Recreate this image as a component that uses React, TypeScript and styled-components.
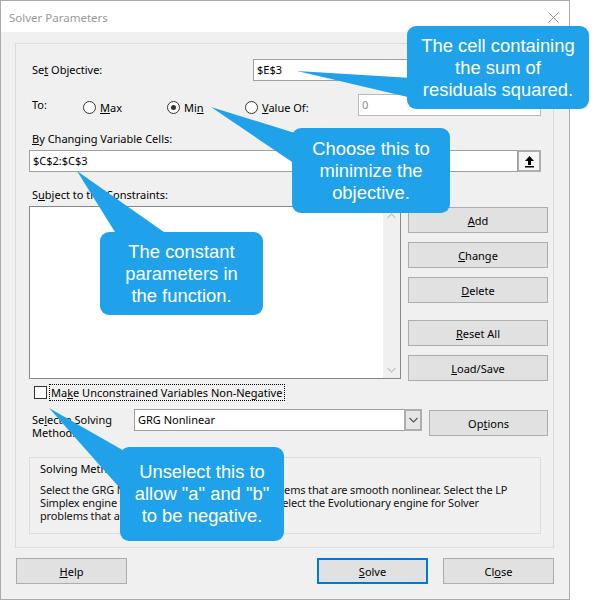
import React from "react";
import styled, { createGlobalStyle } from "styled-components";

const GlobalStyle = createGlobalStyle`
  html, body { margin: 0; padding: 0; background: #ffffff; }
  body { font-family: "Noto Sans", "Open Sans", sans-serif; }
  * { box-sizing: border-box; }
`;

const Page = styled.div`
  position: relative;
  width: 594px;
  height: 600px;
  overflow: hidden;
  background: #ffffff;
`;

const Window = styled.div`
  width: 570px;
  height: 600px;
  border: 1px solid #aaaaaa;
  display: flex;
  flex-direction: column;
  background: #f0f0f0;
  font-size: 11px;
  line-height: 15px;
  color: #000;
`;

const TitleBar = styled.div`
  height: 31px;
  flex-shrink: 0;
  background: #ffffff;
  display: flex;
  align-items: center;
  justify-content: space-between;
  padding: 1px 10px 0 8px;
`;

const Title = styled.span`
  font-size: 11.5px;
  color: #999999;
`;

const Body = styled.div`
  flex: 1;
  padding: 11px 15px 0 14px;
`;

const Panel = styled.div`
  height: 505px;
  border: 1px solid #dadada;
  padding: 15px 5px 0 13px;
  display: flex;
  flex-direction: column;
`;

const Row = styled.div<{ $mt?: number; $h?: number }>`
  display: flex;
  align-items: center;
  margin-top: ${(p) => p.$mt ?? 0}px;
  height: ${(p) => (p.$h ? `${p.$h}px` : "auto")};
`;

const Label = styled.div<{ $w?: number }>`
  width: ${(p) => (p.$w ? `${p.$w}px` : "auto")};
  padding-left: 3px;
  line-height: 16px;
  flex-shrink: 0;
`;

const TextField = styled.div<{ $w: number }>`
  width: ${(p) => p.$w}px;
  height: 22px;
  display: flex;
  flex-shrink: 0;
`;

const Field = styled.div<{ $disabled?: boolean }>`
  flex: 1;
  border: 1px solid ${(p) => (p.$disabled ? "#b9b9b9" : "#a0a0a0")};
  background: #ffffff;
  color: ${(p) => (p.$disabled ? "#8a8a8a" : "#000")};
  padding: 2px 0 0 3px;
  white-space: nowrap;
  overflow: hidden;
`;

const RefButton = styled.div`
  width: 23px;
  border: 2px solid #adadad;
  border-left-width: 1px;
  background: #f6f6f6;
  display: flex;
  align-items: center;
  justify-content: center;
`;

const RadioItem = styled.label<{ $w: number }>`
  width: ${(p) => p.$w}px;
  display: flex;
  align-items: center;
  gap: 4px;
  margin-top: 4px;
  flex-shrink: 0;
`;

const RadioCircle = styled.span<{ $checked?: boolean }>`
  width: 13px;
  height: 13px;
  border: 1px solid #333333;
  border-radius: 50%;
  background: #ffffff;
  display: flex;
  align-items: center;
  justify-content: center;
  &::after {
    content: "";
    width: 5px;
    height: 5px;
    border-radius: 50%;
    background: ${(p) => (p.$checked ? "#333333" : "transparent")};
  }
`;

const ListRow = styled.div`
  display: flex;
  gap: 7px;
  margin-top: 3px;
  height: 175px;
`;

const ListBox = styled.div`
  width: 372px;
  height: 173px;
  border: 1px solid #828790;
  background: #ffffff;
  display: flex;
  justify-content: flex-end;
`;

const ScrollBar = styled.div`
  width: 17px;
  background: #f0f0f0;
  display: flex;
  flex-direction: column;
  justify-content: space-between;
`;

const ScrollArrow = styled.div`
  height: 17px;
  display: flex;
  align-items: center;
  justify-content: center;
`;

const ButtonColumn = styled.div`
  width: 140px;
  padding-top: 1px;
  display: flex;
  flex-direction: column;
`;

const Button = styled.div<{ $w?: number; $mt?: number; $ml?: number; $primary?: boolean }>`
  width: ${(p) => (p.$w ? `${p.$w}px` : "100%")};
  height: 26px;
  margin-top: ${(p) => p.$mt ?? 0}px;
  margin-left: ${(p) => p.$ml ?? 0}px;
  flex-shrink: 0;
  background: #e1e1e1;
  border: ${(p) => (p.$primary ? "2px solid #0078d7" : "1px solid #adadad")};
  display: flex;
  align-items: center;
  justify-content: center;
`;

const CheckRow = styled.div`
  display: flex;
  align-items: center;
  margin-top: 3px;
  height: 17px;
  padding-left: 5px;
`;

const CheckBox = styled.span`
  width: 13px;
  height: 13px;
  border: 1px solid #333333;
  background: #ffffff;
  margin-right: 2px;
`;

const FocusLabel = styled.span`
  height: 17px;
  border: 1px dotted #000000;
  padding: 0 2px 0 1px;
  line-height: 15px;
`;

const MethodRow = styled.div`
  display: flex;
  align-items: flex-start;
  margin-top: 8px;
  height: 30px;
`;

const MethodLabel = styled.div`
  width: 105px;
  padding: 4px 0 0 3px;
  line-height: 13px;
  flex-shrink: 0;
`;

const Combo = styled.div`
  width: 288px;
  height: 22px;
  border: 1px solid #a0a0a0;
  background: #ffffff;
  display: flex;
  flex-shrink: 0;
`;

const ComboText = styled.div`
  flex: 1;
  padding: 2px 0 0 3px;
`;

const ComboArrow = styled.div`
  width: 18px;
  margin: -1px -1px -1px 0;
  border: 2px solid #adadad;
  background: #e6e6e6;
  display: flex;
  align-items: center;
  justify-content: center;
`;

const GroupBox = styled.div`
  width: 512px;
  height: 77px;
  margin-top: 18px;
  border: 1px solid #dcdcdc;
  padding: 4px 10px 0 10px;
  line-height: 13px;
`;

const GroupText = styled.div`
  margin-top: 8px;
  color: #111111;
  letter-spacing: -0.15px;
  white-space: nowrap;
`;

const Footer = styled.div`
  margin-top: 10px;
  padding-left: 1px;
  display: flex;
  justify-content: space-between;
`;

const FooterRight = styled.div`
  display: flex;
  gap: 15px;
`;

const TailLayer = styled.svg`
  position: absolute;
  left: 0;
  top: 0;
  pointer-events: none;
`;

const Bubble = styled.div<{ $x: number; $y: number; $w: number; $h: number }>`
  position: absolute;
  left: ${(p) => p.$x}px;
  top: ${(p) => p.$y}px;
  width: ${(p) => p.$w}px;
  height: ${(p) => p.$h}px;
  background: #1fa2ea;
  border-radius: 9px;
  color: #ffffff;
  font-family: "Liberation Sans", Arial, sans-serif;
  font-size: 18.4px;
  line-height: 22px;
  display: flex;
  align-items: center;
  justify-content: center;
  text-align: center;
`;

const BLUE = "#1fa2ea";

const callouts = [
  {
    x: 407, y: 26, w: 182, h: 83,
    tail: "297,71 412,78 412,98",
    lines: ["The cell containing", "the sum of", "residuals squared."],
  },
  {
    x: 292, y: 128, w: 158, h: 85,
    tail: "211,107 298,134 298,166",
    lines: ["Choose this to", "minimize the", "objective."],
  },
  {
    x: 100, y: 232, w: 163, h: 83,
    tail: "77,171 118,237 171,237",
    lines: ["The constant", "parameters in", "the function."],
  },
  {
    x: 120, y: 447, w: 164, h: 94,
    tail: "49,408 126,452 126,495",
    lines: ["Unselect this to", 'allow "a" and "b"', "to be negative."],
  },
];

const CloseIcon = () => (
  <svg width="11" height="11" viewBox="0 0 11 11">
    <path d="M0.5 0.5 L10.5 10.5 M10.5 0.5 L0.5 10.5" stroke="#8f8f8f" strokeWidth="1" />
  </svg>
);

const RefArrow = () => (
  <svg width="11" height="13" viewBox="0 0 11 13">
    <path d="M5.5 1 L10 6 L7 6 L7 10 L4 10 L4 6 L1 6 Z" fill="#000" />
    <rect x="1" y="11" width="9" height="1.5" fill="#000" />
  </svg>
);

const Chevron = ({ up, color }: { up?: boolean; color: string }) => (
  <svg width="9" height="6" viewBox="0 0 9 6">
    <path
      d={up ? "M0.5 5 L4.5 1 L8.5 5" : "M0.5 1 L4.5 5 L8.5 1"}
      stroke={color}
      strokeWidth="1.2"
      fill="none"
    />
  </svg>
);

export default function App() {
  return (
    <Page>
      <GlobalStyle />
      <Window>
        <TitleBar>
          <Title>Solver Parameters</Title>
          <CloseIcon />
        </TitleBar>
        <Body>
          <Panel>
            <Row $h={22}>
              <Label $w={224}>
                Se<u>t</u> Objective:
              </Label>
              <TextField $w={288}>
                <Field>$E$3</Field>
                <RefButton>
                  <RefArrow />
                </RefButton>
              </TextField>
            </Row>

            <Row $mt={13} $h={22}>
              <Label $w={54}>To:</Label>
              <RadioItem $w={84}>
                <RadioCircle />
                <span>
                  <u>M</u>ax
                </span>
              </RadioItem>
              <RadioItem $w={78}>
                <RadioCircle $checked />
                <span>
                  Mi<u>n</u>
                </span>
              </RadioItem>
              <RadioItem $w={113}>
                <RadioCircle />
                <span>
                  <u>V</u>alue Of:
                </span>
              </RadioItem>
              <TextField $w={183}>
                <Field $disabled>0</Field>
              </TextField>
            </Row>

            <Row $mt={15}>
              <Label>
                <u>B</u>y Changing Variable Cells:
              </Label>
            </Row>
            <Row $mt={3}>
              <TextField $w={512}>
                <Field>$C$2:$C$3</Field>
                <RefButton>
                  <RefArrow />
                </RefButton>
              </TextField>
            </Row>

            <Row $mt={15}>
              <Label>
                S<u>u</u>bject to the Constraints:
              </Label>
            </Row>
            <ListRow>
              <ListBox>
                <ScrollBar>
                  <ScrollArrow>
                    <Chevron up color="#c4c4c4" />
                  </ScrollArrow>
                  <ScrollArrow>
                    <Chevron color="#c4c4c4" />
                  </ScrollArrow>
                </ScrollBar>
              </ListBox>
              <ButtonColumn>
                <Button>
                  <span>
                    <u>A</u>dd
                  </span>
                </Button>
                <Button $mt={9}>
                  <span>
                    <u>C</u>hange
                  </span>
                </Button>
                <Button $mt={9}>
                  <span>
                    <u>D</u>elete
                  </span>
                </Button>
                <Button $mt={17}>
                  <span>
                    <u>R</u>eset All
                  </span>
                </Button>
                <Button $mt={9}>
                  <span>
                    <u>L</u>oad/Save
                  </span>
                </Button>
              </ButtonColumn>
            </ListRow>

            <CheckRow>
              <CheckBox />
              <FocusLabel>
                Ma<u>k</u>e Unconstrained Variables Non-Negative
              </FocusLabel>
            </CheckRow>

            <MethodRow>
              <MethodLabel>
                Se<u>l</u>ect a Solving
                <br />
                Method:
              </MethodLabel>
              <Combo>
                <ComboText>GRG Nonlinear</ComboText>
                <ComboArrow>
                  <Chevron color="#555555" />
                </ComboArrow>
              </Combo>
              <Button $w={119} $mt={1} $ml={7}>
                <span>
                  Op<u>t</u>ions
                </span>
              </Button>
            </MethodRow>

            <GroupBox>
              <div>Solving Method</div>
              <GroupText>
                Select the GRG Nonlinear engine for Solver Problems that are smooth nonlinear. Select the LP
                <br />
                Simplex engine for linear Solver Problems, and select the Evolutionary engine for Solver
                <br />
                problems that are non-smooth.
              </GroupText>
            </GroupBox>
          </Panel>

          <Footer>
            <Button $w={111}>
              <span>
                <u>H</u>elp
              </span>
            </Button>
            <FooterRight>
              <Button $w={111} $primary>
                <span>
                  <u>S</u>olve
                </span>
              </Button>
              <Button $w={111}>
                <span>
                  Cl<u>o</u>se
                </span>
              </Button>
            </FooterRight>
          </Footer>
        </Body>
      </Window>

      <TailLayer width="594" height="600" viewBox="0 0 594 600">
        {callouts.map((c) => (
          <polygon key={c.tail} points={c.tail} fill={BLUE} />
        ))}
      </TailLayer>
      {callouts.map((c) => (
        <Bubble key={c.lines[0]} $x={c.x} $y={c.y} $w={c.w} $h={c.h}>
          <div>
            {c.lines.map((l) => (
              <div key={l}>{l}</div>
            ))}
          </div>
        </Bubble>
      ))}
    </Page>
  );
}
